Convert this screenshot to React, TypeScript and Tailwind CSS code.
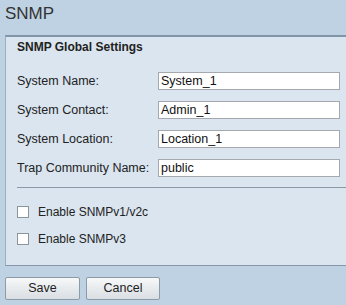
import React from "react";

const rows = [
  ["System Name:", "System_1"],
  ["System Contact:", "Admin_1"],
  ["System Location:", "Location_1"],
  ["Trap Community Name:", "public"],
];

function Box() {
  return <span className="block w-[12px] h-[12px] bg-white border border-[#8c959e]" />;
}

export default function App() {
  return (
    <div
      className="w-[346px] h-[305px] bg-[#bed2e4] text-[#222] overflow-hidden"
      style={{ fontFamily: '"Liberation Sans", Arial, sans-serif' }}
    >
      <div className="h-[35px] pl-[5px] pt-[3px] text-[17px] leading-[22px] text-[#333]">SNMP</div>
      <div className="ml-[5px] h-[231px] bg-[#dae5ef] border-t-[2px] border-t-[#8295a8] border-l border-l-[#9cb0c3] border-b border-b-[#8597a9] pl-[11px]">
        <div className="pt-[3px] h-[25px] text-[12px] font-bold leading-[14px]">SNMP Global Settings</div>
        <div className="flex flex-col gap-[11px] pt-[10px]">
          {rows.map(([l, v]) => (
            <div key={l} className="flex items-center h-[18px]">
              <div className="w-[141px] text-[12.5px] leading-[14px]">{l}</div>
              <div className="w-[182px] h-[18px] bg-white border border-[#a5a9ad] pl-[2px] text-[12.5px] leading-[16px] text-[#111]">{v}</div>
            </div>
          ))}
        </div>
        <div className="mt-[10px] h-px bg-[#8a98a6]" />
        <div className="pt-[17px] flex flex-col gap-[13px] text-[12px] leading-[14px]">
          <div className="flex items-center gap-[9px]">
            <Box />
            <span>Enable SNMPv1/v2c</span>
          </div>
          <div className="flex items-center gap-[9px]">
            <Box />
            <span>Enable SNMPv3</span>
          </div>
        </div>
      </div>
      <div className="flex gap-[6px] pl-[5px] pt-[11px]">
        <button className="w-[75px] h-[23px] rounded-[2px] border border-[#8d9aa7] bg-gradient-to-b from-[#f7f8f9] to-[#d9dee3] text-[12.5px] text-[#222]">Save</button>
        <button className="w-[74px] h-[23px] rounded-[2px] border border-[#8d9aa7] bg-gradient-to-b from-[#f7f8f9] to-[#d9dee3] text-[12.5px] text-[#222]">Cancel</button>
      </div>
    </div>
  );
}
